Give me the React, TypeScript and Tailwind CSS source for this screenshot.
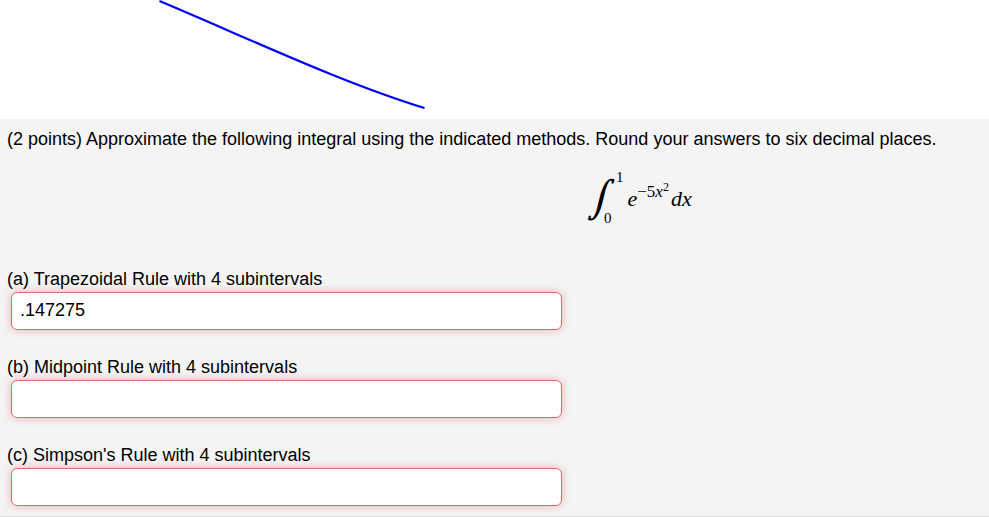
import { useState } from 'react';

interface Part {
  id: string;
  label: string;
  initial: string;
}

const PARTS: Part[] = [
  { id: 'trapezoidal', label: '(a) Trapezoidal Rule with 4 subintervals', initial: '.147275' },
  { id: 'midpoint', label: '(b) Midpoint Rule with 4 subintervals', initial: '' },
  { id: 'simpson', label: "(c) Simpson's Rule with 4 subintervals", initial: '' },
];

function Curve() {
  return (
    <svg className="block" width="480" height="119" viewBox="0 0 480 119" fill="none">
      <path d="M159.500 1C250 39 340 82 424.500 108" stroke="#0000ff" strokeWidth="2.200" />
    </svg>
  );
}

// ∫ from 0 to 1 of e^(-5x²) dx
function Integral() {
  return (
    <div className="flex h-[114px] justify-center pt-[18px] pl-[290px] font-['Liberation_Serif',serif] text-[22px] leading-[22px]">
      <div className="flex h-14">
        <span className="font-['DejaVu_Math_TeX_Gyre','DejaVu_Serif',serif] text-[38px] leading-[58px] italic">∫</span>
        {/* limits tuck in under the slant of the integral sign */}
        <div className="-ml-1.5 flex h-14 flex-col justify-between text-[15px] leading-[15px]">
          <span className="pl-3">1</span>
          <span>0</span>
        </div>
        <div className="flex items-start pt-[18px] pl-1 italic">
          <span>e</span>
          <span className="-mt-1 text-[17px] leading-[15px]">
            <span className="not-italic">−5</span>x
          </span>
          <span className="-mt-2 pr-0.5 text-[12px] leading-[15px] not-italic">2</span>
          <span>dx</span>
        </div>
      </div>
    </div>
  );
}

function AnswerField({ part }: { part: Part }) {
  const [value, setValue] = useState(part.initial);

  return (
    <div>
      <label htmlFor={part.id} className="block">{part.label}</label>
      <input
        id={part.id}
        type="text"
        value={value}
        onChange={e => setValue(e.target.value)}
        className="ml-1 block h-[38px] w-full max-w-[551px] rounded-md border border-[#d07070] bg-white px-2 pb-0.5 text-[18px] shadow-[0_0_8px_rgba(210,80,80,0.4)] outline-none"
      />
    </div>
  );
}

export default function App() {
  return (
    <div className="overflow-hidden bg-white font-['Liberation_Sans',Arial,sans-serif] text-[18px] leading-[26px] text-black">
      <Curve />
      <main className="border-b border-[#dddddd] bg-[#f4f4f4] px-[7px] pt-[7px] pb-[10px]">
        <p>
          (2 points) Approximate the following integral using the indicated methods. Round your answers to six decimal
          places.
        </p>
        <Integral />
        <div className="flex flex-col gap-6">
          {PARTS.map(part => <AnswerField key={part.id} part={part} />)}
        </div>
      </main>
    </div>
  );
}
